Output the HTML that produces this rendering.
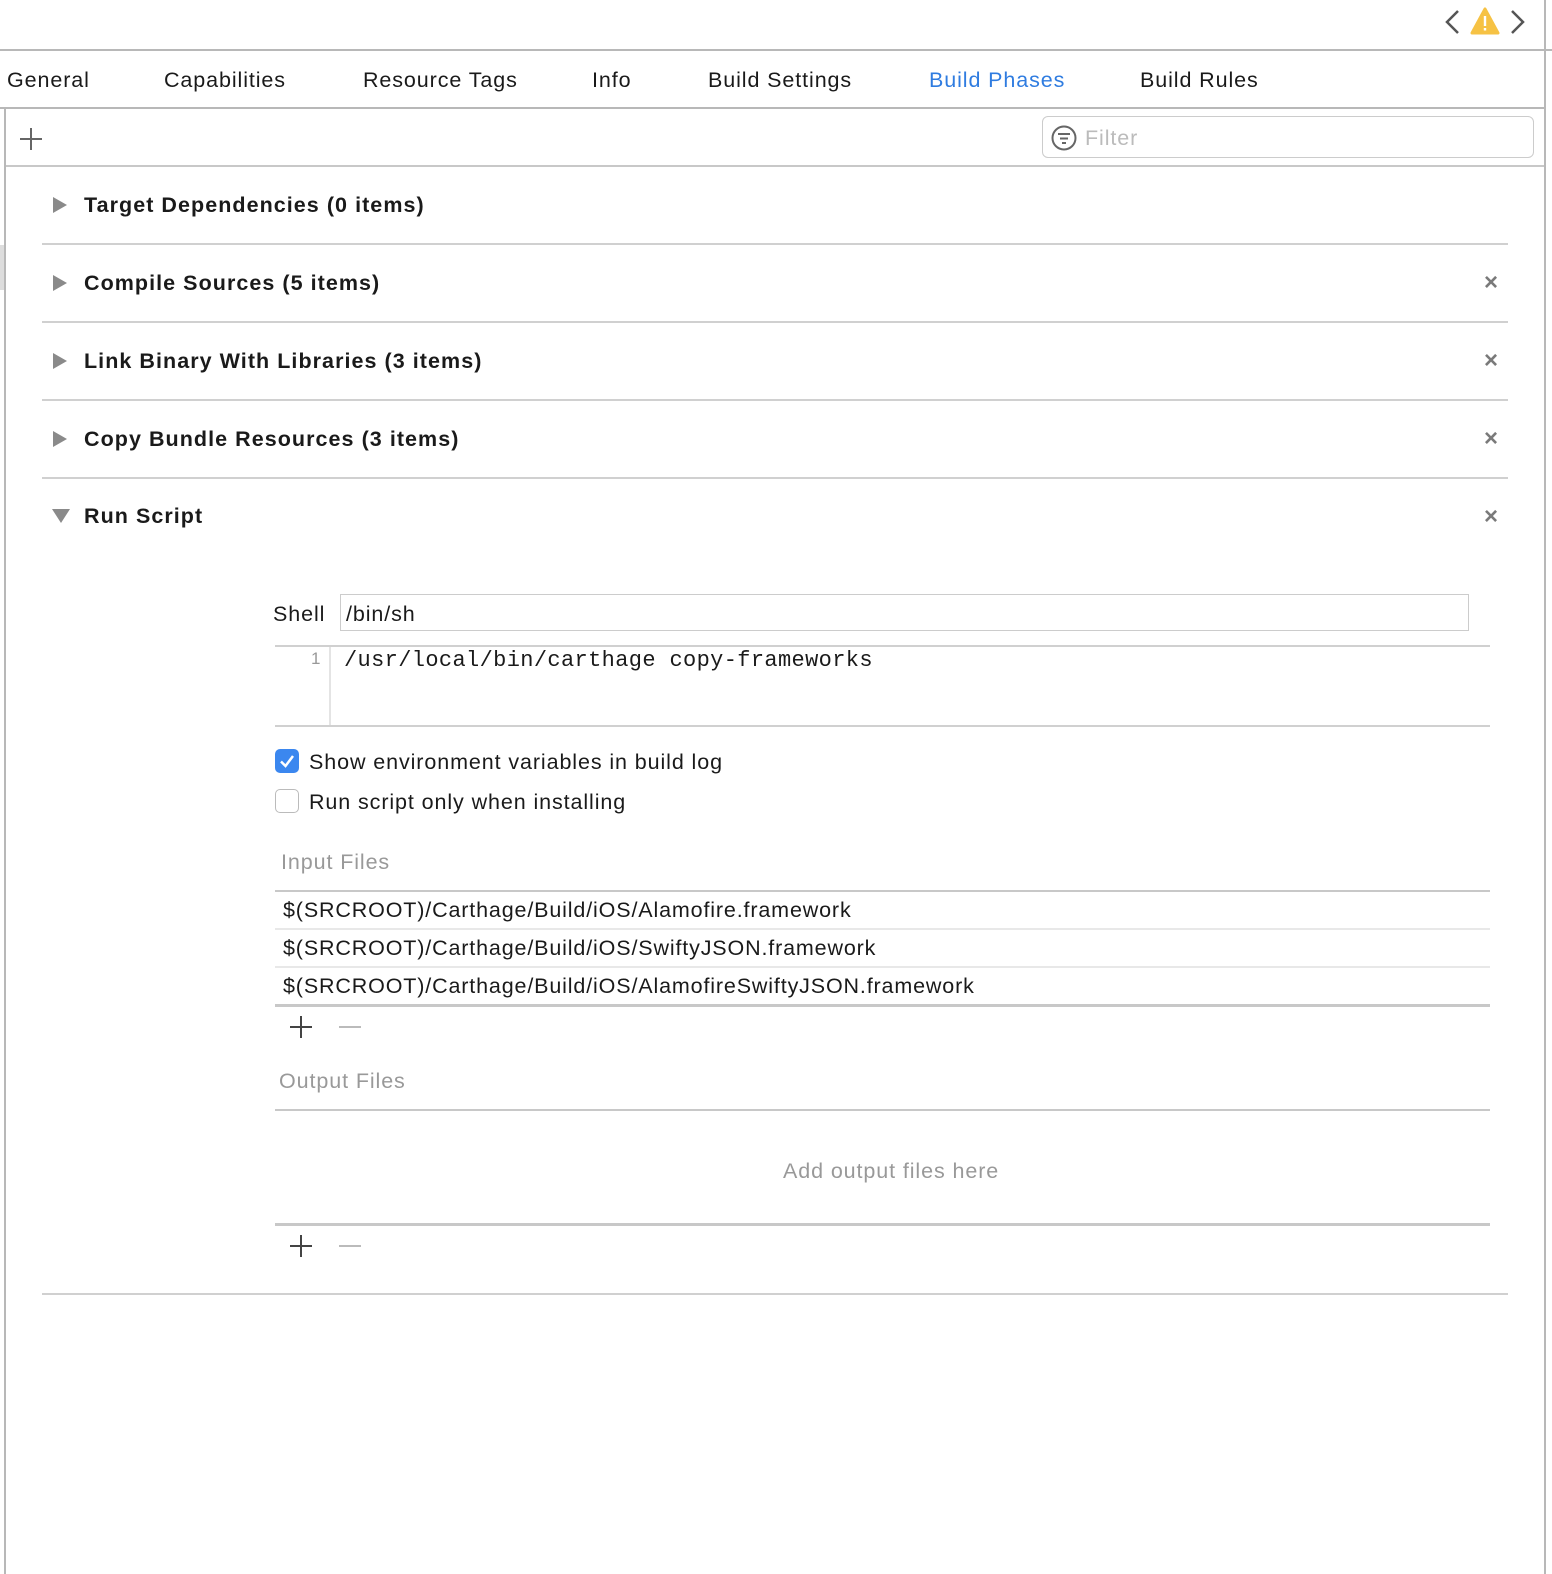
<!DOCTYPE html>
<html><head><meta charset="utf-8"><style>
*{margin:0;padding:0;box-sizing:border-box}
body{width:1552px;height:1574px;background:#fff;position:relative;overflow:hidden;font-family:"Liberation Sans",sans-serif;color:#1a1a1a}
.a{position:absolute;white-space:nowrap}
.t{font-size:21.5px;line-height:26px;letter-spacing:0.9px}
.h{position:absolute;height:2px;background:#d0d0d0}
.b{font-weight:bold;font-size:21.5px;line-height:26px;letter-spacing:1.05px}
.tri{position:absolute;width:0;height:0;border-top:8px solid transparent;border-bottom:8px solid transparent;border-left:14px solid #8a8a8a}
.x{position:absolute;font-size:24px;color:#7a7a7a;line-height:24px;font-weight:bold}
.m{font-family:"Liberation Mono",monospace;font-size:22px;line-height:26px;letter-spacing:0.36px}
.p{letter-spacing:0.85px}
</style></head><body>
<svg class="a" style="left:1440px;top:6px" width="100" height="34">
<polyline points="18,5 7,16 18,27" fill="none" stroke="#555" stroke-width="2.5"/>
<polygon points="45,3 58,27 32,27" fill="#f6c244" stroke="#f6c244" stroke-width="3" stroke-linejoin="round"/>
<rect x="43.8" y="10" width="2.4" height="10" fill="#fff"/><rect x="43.8" y="22" width="2.4" height="2.5" fill="#fff"/>
<polyline points="72,5 83,16 72,27" fill="none" stroke="#555" stroke-width="2.5"/>
</svg>
<div class="h" style="left:0;top:49px;width:1552px;background:#b8b8b8"></div>
<div class="a" style="left:1544px;top:0;width:2px;height:1574px;background:#b8b8b8"></div>
<div class="a t" style="left:7px;top:67px">General</div>
<div class="a t" style="left:164px;top:67px">Capabilities</div>
<div class="a t" style="left:363px;top:67px">Resource Tags</div>
<div class="a t" style="left:592px;top:67px">Info</div>
<div class="a t" style="left:708px;top:67px">Build Settings</div>
<div class="a t" style="left:929px;top:67px;color:#2f7ce0">Build Phases</div>
<div class="a t" style="left:1140px;top:67px">Build Rules</div>
<div class="h" style="left:0;top:107px;width:1545px;background:#b8b8b8"></div>
<div class="a" style="left:4px;top:108px;width:2px;height:1466px;background:#b8b8b8"></div>
<div class="a" style="left:0;top:245px;width:4px;height:45px;background:#ddd"></div>
<svg class="a" style="left:18px;top:126px" width="26" height="26"><path d="M13 2V24M2 13H24" stroke="#666" stroke-width="2"/></svg>
<div class="a" style="left:1042px;top:116px;width:492px;height:42px;border:1.5px solid #ccc;border-radius:6px"></div>
<svg class="a" style="left:1050px;top:124px" width="28" height="28"><circle cx="14" cy="14" r="11.5" fill="none" stroke="#666" stroke-width="2"/><path d="M8 10H20M10 14.5H18M12 19H16" stroke="#666" stroke-width="2"/></svg>
<div class="a t" style="left:1085px;top:125px;color:#bbb">Filter</div>
<div class="h" style="left:6px;top:165px;width:1538px;background:#c8c8c8"></div>
<div class="tri" style="left:53px;top:197px"></div>
<div class="a b" style="left:84px;top:192px">Target Dependencies (0 items)</div>
<div class="h" style="left:42px;top:243px;width:1466px"></div>
<div class="tri" style="left:53px;top:275px"></div>
<div class="a b" style="left:84px;top:270px">Compile Sources (5 items)</div>
<div class="x" style="left:1484px;top:271px">×</div>
<div class="h" style="left:42px;top:321px;width:1466px"></div>
<div class="tri" style="left:53px;top:353px"></div>
<div class="a b" style="left:84px;top:348px">Link Binary With Libraries (3 items)</div>
<div class="x" style="left:1484px;top:349px">×</div>
<div class="h" style="left:42px;top:399px;width:1466px"></div>
<div class="tri" style="left:53px;top:431px"></div>
<div class="a b" style="left:84px;top:426px">Copy Bundle Resources (3 items)</div>
<div class="x" style="left:1484px;top:427px">×</div>
<div class="h" style="left:42px;top:477px;width:1466px"></div>
<div class="a" style="left:52px;top:509px;width:0;height:0;border-left:9px solid transparent;border-right:9px solid transparent;border-top:14px solid #8a8a8a"></div>
<div class="a b" style="left:84px;top:503px">Run Script</div>
<div class="x" style="left:1484px;top:505px">×</div>
<div class="a t" style="left:273px;top:601px">Shell</div>
<div class="a" style="left:340px;top:594px;width:1129px;height:37px;border:1.5px solid #ccc"></div>
<div class="a t" style="left:346px;top:601px">/bin/sh</div>
<div class="h" style="left:275px;top:645px;width:1215px"></div>
<div class="a" style="left:329px;top:647px;width:2px;height:78px;background:#e4e4e4"></div>
<div class="a" style="left:311px;top:649px;font-size:17px;color:#999">1</div>
<div class="a m" style="left:344px;top:648px">/usr/local/bin/carthage copy-frameworks</div>
<div class="h" style="left:275px;top:725px;width:1215px"></div>
<div class="a" style="left:275px;top:749px;width:24px;height:24px;border-radius:5px;background:#3b87ef"></div>
<svg class="a" style="left:275px;top:749px" width="24" height="24"><path d="M6 12.5L10.5 17L18 7" fill="none" stroke="#fff" stroke-width="2.5"/></svg>
<div class="a t" style="left:309px;top:749px">Show environment variables in build log</div>
<div class="a" style="left:275px;top:789px;width:24px;height:24px;border-radius:5px;border:1.5px solid #bbb"></div>
<div class="a t" style="left:309px;top:789px">Run script only when installing</div>
<div class="a t" style="left:281px;top:849px;color:#999">Input Files</div>
<div class="h" style="left:275px;top:890px;width:1215px;background:#c8c8c8"></div>
<div class="a t p" style="left:283px;top:897px">$(SRCROOT)/Carthage/Build/iOS/Alamofire.framework</div>
<div class="h" style="left:275px;top:928px;width:1215px;background:#e8e8e8"></div>
<div class="a t p" style="left:283px;top:935px">$(SRCROOT)/Carthage/Build/iOS/SwiftyJSON.framework</div>
<div class="h" style="left:275px;top:966px;width:1215px;background:#e8e8e8"></div>
<div class="a t p" style="left:283px;top:973px">$(SRCROOT)/Carthage/Build/iOS/AlamofireSwiftyJSON.framework</div>
<div class="h" style="left:275px;top:1004px;width:1215px;height:3px;background:#c8c8c8"></div>
<svg class="a" style="left:288px;top:1014px" width="80" height="26"><path d="M13 2V24M2 13H24" stroke="#444" stroke-width="2"/><path d="M51 13H73" stroke="#bbb" stroke-width="2"/></svg>
<div class="a t" style="left:279px;top:1068px;color:#999">Output Files</div>
<div class="h" style="left:275px;top:1109px;width:1215px;background:#c8c8c8"></div>
<div class="a t" style="left:783px;top:1158px;color:#999">Add output files here</div>
<div class="h" style="left:275px;top:1223px;width:1215px;height:3px;background:#c8c8c8"></div>
<svg class="a" style="left:288px;top:1233px" width="80" height="26"><path d="M13 2V24M2 13H24" stroke="#444" stroke-width="2"/><path d="M51 13H73" stroke="#bbb" stroke-width="2"/></svg>
<div class="h" style="left:42px;top:1293px;width:1466px"></div>
</body></html>
